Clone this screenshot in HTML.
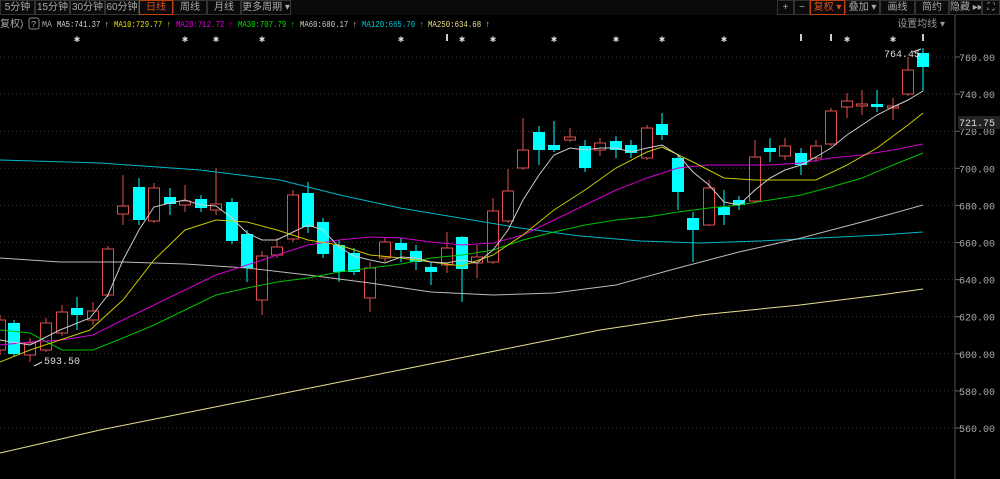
<!DOCTYPE html>
<html><head><meta charset="utf-8"><style>
body{margin:0;width:1000px;height:479px;background:#000;overflow:hidden;font-family:"Liberation Sans","Noto Sans CJK SC",sans-serif;}
#tb{position:absolute;left:0;top:0;width:1000px;height:15px;background:#0a0a0a;}
.b{position:absolute;top:0;border:1px solid #333;color:#aaa;font-size:10px;line-height:13px;text-align:center;box-sizing:border-box;height:15px;white-space:nowrap;overflow:hidden;}
svg{position:absolute;left:0;top:0}
</style></head><body>
<div id="tb">
<div class="b" style="left:0;width:35px">5分钟</div>
<div class="b" style="left:35px;width:35px">15分钟</div>
<div class="b" style="left:70px;width:35px">30分钟</div>
<div class="b" style="left:105px;width:34px">60分钟</div>
<div class="b" style="left:139px;width:34px;border-color:#c04010;color:#e05020">日线</div>
<div class="b" style="left:173px;width:34px">周线</div>
<div class="b" style="left:207px;width:34px">月线</div>
<div class="b" style="left:241px;width:50px">更多周期 ▾</div>
<div class="b" style="left:777px;width:17px">+</div>
<div class="b" style="left:794px;width:16px">−</div>
<div class="b" style="left:810px;width:35px;border-color:#c04010;color:#e05020">复权 ▾</div>
<div class="b" style="left:845px;width:35px">叠加 ▾</div>
<div class="b" style="left:880px;width:35px">画线</div>
<div class="b" style="left:915px;width:34px">简约</div>
<div class="b" style="left:949px;width:33px">隐藏 ▸▸</div>
<div class="b" style="left:982px;width:18px">⛶</div>
</div>
<svg id="s" width="1000" height="479" font-family="Liberation Mono, monospace"></svg>
<script>
var s=document.getElementById('s'),h='';
h+='<line x1="955" y1="15" x2="955" y2="479" stroke="#555"/>';
var labs=[760,740,720,700,680,660,640,620,600,580,560];
labs.forEach(function(v){var y=57+(760-v)*1.855;h+='<line x1="0" y1="'+y+'" x2="955" y2="'+y+'" stroke="#333" stroke-dasharray="1,3"/><line x1="955" y1="'+y+'" x2="960" y2="'+y+'" stroke="#666"/><text x="995" y="'+(y+4)+'" fill="#aaa" font-size="10" text-anchor="end">'+v.toFixed(2)+'</text>';});
h+='<rect x="958" y="116" width="42" height="13" fill="#222"/><text x="995" y="126" fill="#ddd" font-size="10" text-anchor="end">721.75</text>';
h+='<text x="0" y="27" font-size="10" fill="#aaa" font-family="Liberation Sans,Noto Sans CJK SC,sans-serif">复权)</text><rect x="29" y="18" width="10" height="11" fill="none" stroke="#888" rx="2"/><text x="31" y="27" font-size="9" fill="#aaa">?</text>';
var ma=[['MA',42,10,'#aaa'],['MA5:741.37 ↑',57,52,'#ddd'],['MA10:729.77 ↑',114,57,'#e0e000'],['MA20:712.72 ↑',176,57,'#e000e0'],['MA30:707.79 ↑',238,57,'#00e000'],['MA60:680.17 ↑',300,57,'#ccc'],['MA120:665.70 ↑',362,62,'#00c8d8'],['MA250:634.68 ↑',428,62,'#e8e090']];
ma.forEach(function(m){h+='<text x="'+m[1]+'" y="27" font-size="9" fill="'+m[3]+'" textLength="'+m[2]+'" lengthAdjust="spacingAndGlyphs">'+m[0]+'</text>';});
h+='<text x="945" y="27" font-size="10" fill="#999" text-anchor="end" font-family="Liberation Sans,Noto Sans CJK SC,sans-serif">设置均线 ▾</text>';
[77,185,216,262,401,462,493,554,616,662,724,847,893].forEach(function(x){h+='<text x="'+x+'" y="42" font-size="10" fill="#ddd" text-anchor="middle">✱</text>';});
[447,801,831,923].forEach(function(x){h+='<rect x="'+(x-1)+'" y="34" width="2" height="7" fill="#ccc"/>';});
var c=[[0,320,350,315,355,1],[14,323,354,320,356,0],[30,343,355,338,362,1],[46,323,350,318,352,1],[62,312,333,305,336,1],[77,308,315,297,330,0],[93,311,320,302,325,1],[108,249,295,246,297,1],[123,206,214,175,225,1],[139,187,220,178,225,0],[154,188,221,183,223,1],[170,197,204,188,215,0],[185,201,205,185,212,1],[201,199,208,195,212,0],[216,204,210,168,215,1],[232,202,241,198,244,0],[247,234,268,230,282,0],[262,256,300,251,315,1],[277,247,255,238,258,1],[293,195,239,190,242,1],[308,193,227,182,233,0],[323,222,254,218,258,0],[339,245,272,240,282,0],[354,253,272,248,275,0],[370,268,298,262,312,1],[385,242,258,238,262,1],[401,243,250,238,262,0],[416,251,262,245,270,0],[431,267,272,262,285,0],[447,248,265,232,273,1],[462,237,269,236,302,0],[477,257,263,245,278,1],[493,211,262,198,264,1],[508,191,221,169,223,1],[523,150,168,118,170,1],[539,132,150,126,165,0],[554,145,150,121,152,0],[570,137,140,128,142,1],[585,146,168,140,172,0],[600,143,150,138,156,1],[616,141,150,136,158,0],[631,145,153,140,158,0],[647,128,158,125,160,1],[662,124,135,113,140,0],[678,158,192,155,210,0],[693,218,230,212,262,0],[709,188,225,180,226,1],[724,207,215,190,225,0],[739,200,205,196,210,0],[755,157,201,140,203,1],[770,148,152,138,162,0],[785,146,156,138,160,1],[801,153,165,148,175,0],[816,146,158,140,162,1],[831,111,144,108,146,1],[847,101,107,93,118,1],[862,104,106,90,115,1],[877,104,107,90,112,0],[893,106,108,98,120,1],[908,70,94,57,96,1],[923,53,67,48,91,0]];
c.forEach(function(k){var x=k[0],col=k[5]?'#e05050':'#00ffff';h+='<line x1="'+x+'" y1="'+k[3]+'" x2="'+x+'" y2="'+k[4]+'" stroke="'+col+'"/>';
if(k[5])h+='<rect x="'+(x-5.5)+'" y="'+k[1]+'" width="11" height="'+Math.max(1,k[2]-k[1])+'" fill="#000" stroke="'+col+'"/>';else h+='<rect x="'+(x-6)+'" y="'+k[1]+'" width="12" height="'+Math.max(2,k[2]-k[1])+'" fill="'+col+'"/>';});
function pl(p,col){h+='<polyline fill="none" stroke="'+col+'" stroke-width="1" points="'+p+'"/>';}
pl('0,160 100,163 200,170 280,180 340,195 400,208 460,218 520,228 580,236 640,241 700,243 760,241 820,238 880,235 923,232','#00b8c8');
pl('0,453 100,430 200,410 300,390 400,370 500,350 600,330 700,315 800,305 880,295 923,289','#e8e090');
pl('0,258 60,262 123,262 185,264 247,268 308,275 370,283 431,292 493,295 554,293 616,285 678,268 739,252 801,238 862,222 923,205','#bbb');
pl('0,330 30,333 62,350 93,350 123,338 154,325 185,310 216,295 247,288 277,282 308,278 339,272 370,268 401,264 431,258 462,255 493,250 523,240 554,232 585,225 616,220 647,217 678,212 709,208 739,205 770,200 801,195 831,187 862,178 893,165 923,153','#00c000');
pl('0,345 30,342 62,340 93,335 123,320 154,305 185,290 216,275 247,265 277,255 308,245 339,240 370,237 401,238 431,242 462,245 493,243 523,235 554,220 585,205 616,190 647,178 678,168 709,165 739,165 770,165 801,163 831,158 862,155 893,150 923,144','#d000d0');
pl('0,362 30,350 60,340 90,330 123,300 154,260 185,230 216,220 247,222 277,230 308,240 339,245 370,255 401,258 431,262 462,266 493,255 523,235 554,210 585,190 616,168 647,152 662,147 693,162 724,178 755,180 785,180 816,180 847,165 877,148 908,125 923,113','#c8c800');
pl('0,340 30,345 60,330 90,318 108,295 123,260 139,230 154,207 170,203 185,200 201,205 216,206 232,218 247,233 262,240 277,240 293,232 308,225 323,230 339,247 354,256 370,260 385,263 401,257 416,258 431,262 447,263 462,260 477,263 493,250 508,230 523,200 539,175 554,155 570,148 585,150 600,148 616,148 631,152 647,148 662,145 678,155 693,172 709,185 724,202 739,205 755,190 770,178 785,170 801,165 816,157 831,148 847,135 862,125 877,115 893,107 908,100 923,91','#ccc');
h+='<line x1="34" y1="366" x2="42" y2="362" stroke="#ddd"/><text x="44" y="364" fill="#ddd" font-size="10">593.50</text>';
h+='<text x="884" y="57" fill="#ddd" font-size="10">764.45</text><line x1="913" y1="52" x2="921" y2="49" stroke="#ddd"/>';
s.innerHTML=h;
</script>
</body></html>
